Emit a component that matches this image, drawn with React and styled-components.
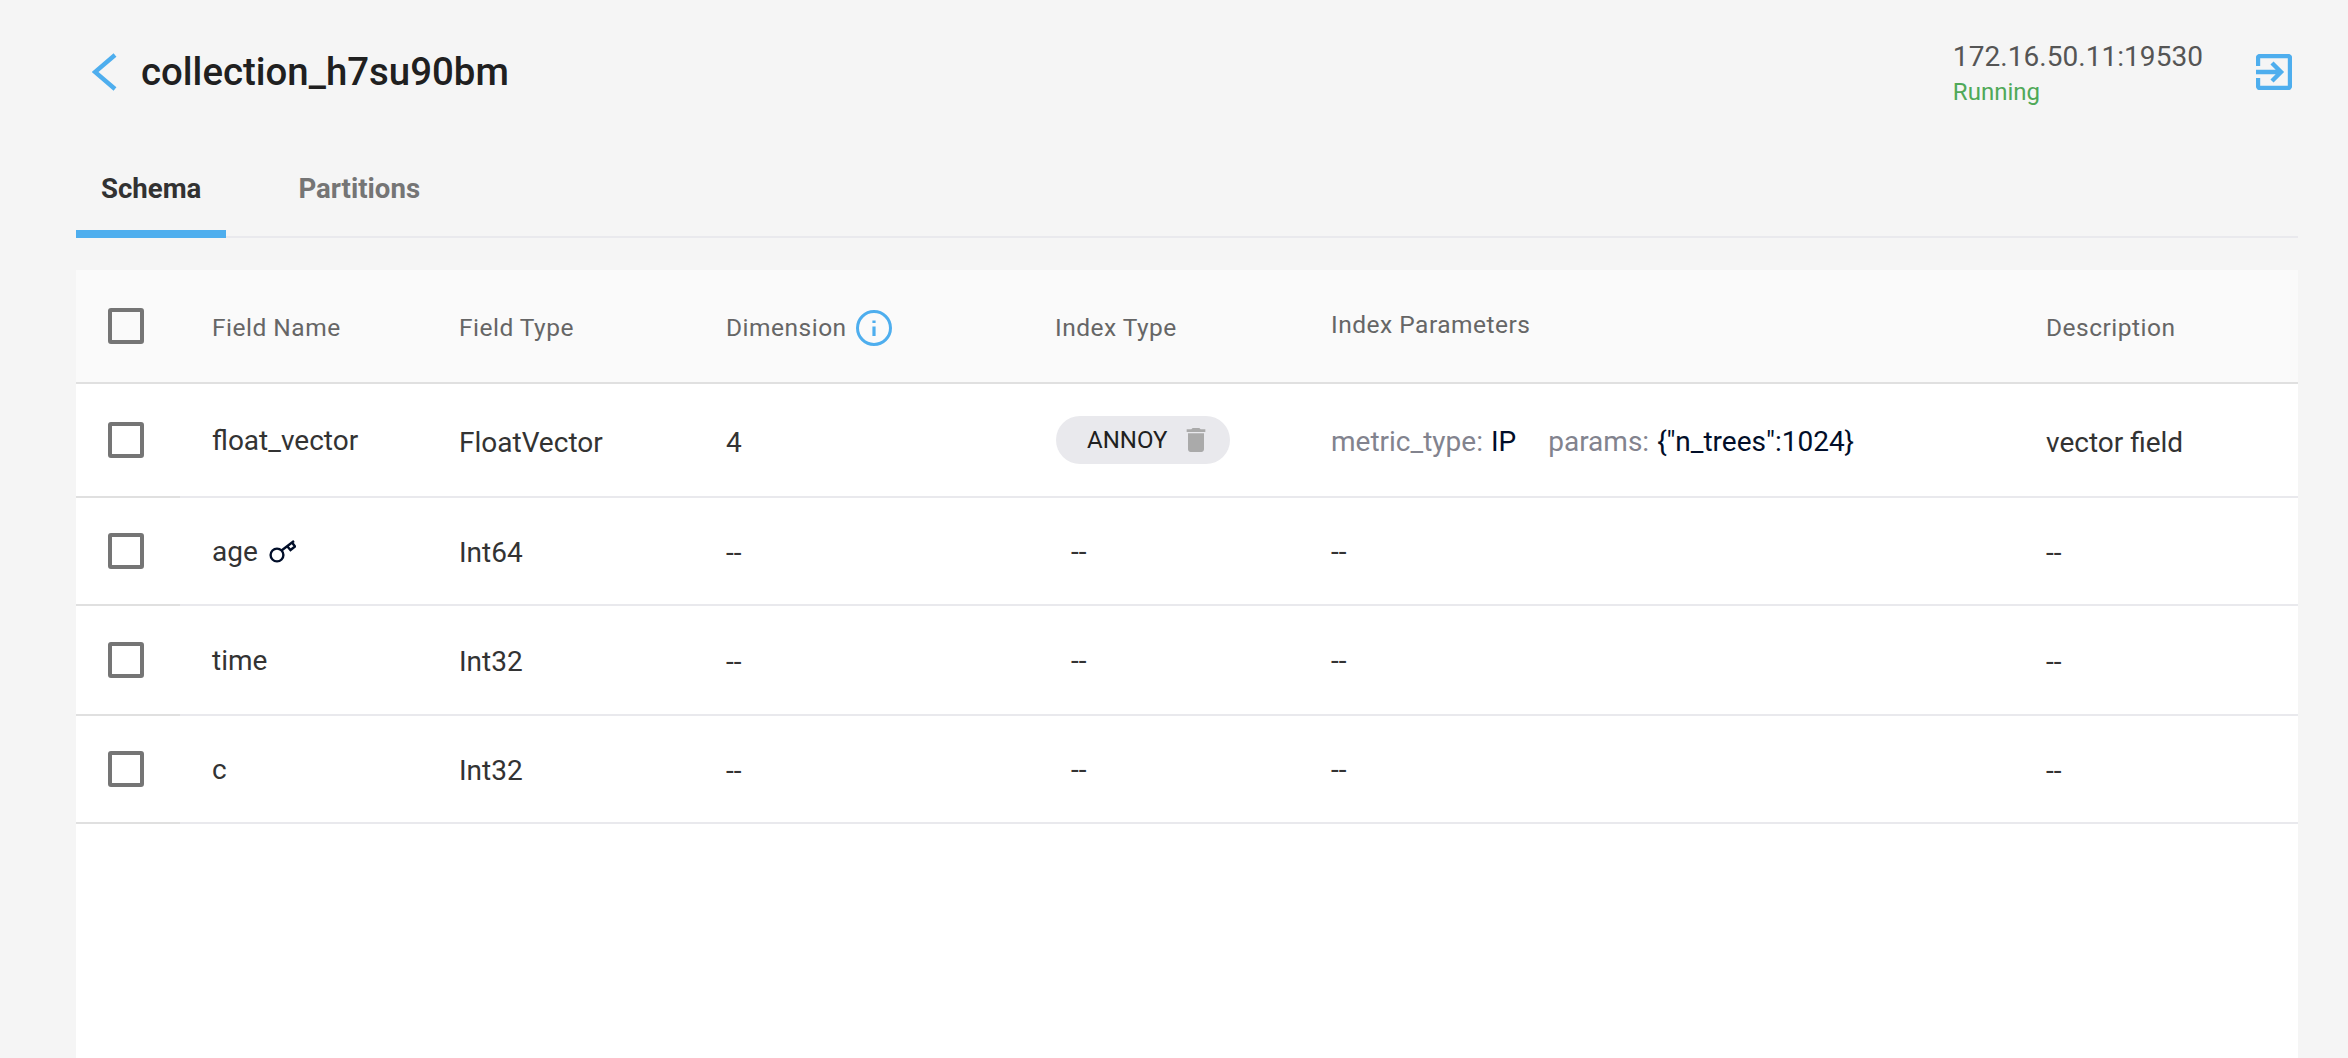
import React from 'react';
import styled, { createGlobalStyle } from 'styled-components';

const GlobalStyle = createGlobalStyle`
  html, body {
    margin: 0;
    height: 100%;
    overflow: hidden;
    background: #f5f5f5;
  }
  body {
    font-family: Roboto, 'Liberation Sans', sans-serif;
    color: #333;
  }
`;

const Page = styled.div`
  display: flex;
  flex-direction: column;
  height: 100vh;
  padding: 0 50px 0 76px;
  box-sizing: border-box;
`;

const Header = styled.header`
  display: flex;
  align-items: center;
  justify-content: space-between;
  height: 144px;
  padding-right: 6px;
  flex: none;
`;

const TitleGroup = styled.div`
  display: flex;
  align-items: center;
  gap: 24px;
  padding-left: 16px;
`;

const Title = styled.h1`
  margin: 0;
  font-size: 38.4px;
  line-height: 44px;
  font-weight: 500;
  color: #202020;
`;

const Status = styled.div`
  display: flex;
  align-items: center;
  gap: 53px;
`;

const StatusText = styled.div`
  padding-top: 5px;
`;

const Address = styled.div`
  font-size: 28px;
  line-height: 33px;
  letter-spacing: 0.05px;
  color: #555;
`;

const Running = styled.div`
  margin-top: 3px;
  font-size: 24px;
  line-height: 33px;
  color: #4fa958;
`;

const Tabs = styled.nav`
  display: flex;
  gap: 47px;
  height: 94px;
  flex: none;
  box-sizing: border-box;
  border-bottom: 2px solid #e9e9ed;
`;

const Tab = styled.div`
  height: 94px;
  box-sizing: border-box;
  padding: 29px 25px 0;
  font-size: 27.6px;
  line-height: 32px;
  font-weight: 700;
  color: ${p => (p.$active ? '#323232' : '#757575')};
  border-bottom: ${p => (p.$active ? '8px solid #4eaeee' : 'none')};
`;

const Table = styled.section`
  flex: 1;
  margin-top: 32px;
  background: #fff;
`;

const Row = styled.div`
  display: grid;
  grid-template-columns: 104px 279px 267px 329px 276px 715px 1fr;
  height: ${p => p.$height}px;
  box-sizing: border-box;
  background: ${p => (p.$head ? '#fafafa' : '#fff')};
`;

const Cell = styled.div`
  display: flex;
  align-items: center;
  box-sizing: border-box;
  min-width: 0;
  padding-left: ${p => p.$indent || 0}px;
  padding-top: ${p => p.$low || 0}px;
  font-size: 28px;
  color: #333;
  border-bottom: 2px solid ${p => (p.$head ? '#e0e0e0' : '#e9e9ed')};
  white-space: pre;
`;

const CheckCell = styled(Cell)`
  padding-left: 32px;
  border-bottom-color: #e0e0e0;
`;

const HeadCell = styled(Cell)`
  font-size: 24.5px;
  letter-spacing: 0.5px;
  color: #666;
  padding-top: 3px;
  padding-bottom: ${p => p.$lift || 0}px;
`;

const Check = styled.input.attrs({ type: 'checkbox' })`
  appearance: none;
  display: block;
  width: 36px;
  height: 36px;
  margin: 0;
  box-sizing: border-box;
  border: 4px solid #757575;
  border-radius: 3px;
  background: transparent;
`;

const Chip = styled.div`
  display: flex;
  align-items: center;
  width: 174px;
  height: 48px;
  box-sizing: border-box;
  margin-left: 1px;
  padding-left: 31px;
  border-radius: 24px;
  background: #e9e9ed;
  font-size: 24px;
  color: #202020;
`;

const ChipDelete = styled.svg`
  margin-left: 13px;
  fill: #aaaaaa;
`;

const Label = styled.span`
  color: #82838e;
`;

const Value = styled.span`
  color: #010e29;
  margin-left: 8px;
`;

const Param = styled.span`
  margin-right: 32px;
`;

const Dash = styled.span`
  margin-left: 16px;
`;

const KeyIcon = styled.svg`
  margin-left: 11px;
  margin-top: -2px;
  fill: none;
  stroke: #010e29;
  stroke-width: 2.4;
`;

const InfoIcon = styled.svg`
  margin-left: 9px;
  fill: none;
  stroke: #4eaeee;
`;

const BackIcon = styled.svg`
  fill: none;
  stroke: #4eaeee;
  stroke-width: 4.4;
`;

const LogoutIcon = styled.svg`
  fill: none;
  stroke: #4eaeee;
  stroke-width: 4.4;
`;

const rows = [
  { name: 'age', type: 'Int64', key: true, height: 108 },
  { name: 'time', type: 'Int32', height: 110 },
  { name: 'c', type: 'Int32', height: 108 },
];

const App = () => (
  <Page>
    <GlobalStyle />
    <Header>
      <TitleGroup>
        <BackIcon width="25" height="38" viewBox="0 0 25 38">
          <path d="M23 2 L3 19 L23 36" />
        </BackIcon>
        <Title>collection_h7su90bm</Title>
      </TitleGroup>
      <Status>
        <StatusText>
          <Address>172.16.50.11:19530</Address>
          <Running>Running</Running>
        </StatusText>
        <LogoutIcon width="36" height="36" viewBox="0 0 36 36">
          <path d="M2 12 V4 A2 2 0 0 1 4 2 H32 A2 2 0 0 1 34 4 V32 A2 2 0 0 1 32 34 H4 A2 2 0 0 1 2 32 V24" />
          <path d="M0 18 H25 M16 9 L25 18 L16 27" />
        </LogoutIcon>
      </Status>
    </Header>

    <Tabs>
      <Tab $active>Schema</Tab>
      <Tab>Partitions</Tab>
    </Tabs>

    <Table>
      <Row $head $height={114}>
        <CheckCell $head><Check /></CheckCell>
        <HeadCell $head $indent={32}>Field Name</HeadCell>
        <HeadCell $head>Field Type</HeadCell>
        <HeadCell $head>
          Dimension
          <InfoIcon width="36" height="36" viewBox="0 0 36 36">
            <circle cx="18" cy="18" r="16.5" strokeWidth="3" />
            <path d="M18 16.5 V26" strokeWidth="3.2" />
            <path d="M18 10.5 V13" strokeWidth="3.2" />
          </InfoIcon>
        </HeadCell>
        <HeadCell $head>Index Type</HeadCell>
        <HeadCell $head $lift={6}>Index Parameters</HeadCell>
        <HeadCell $head>Description</HeadCell>
      </Row>

      <Row $height={114}>
        <CheckCell><Check /></CheckCell>
        <Cell $indent={32}>float_vector</Cell>
        <Cell $low={5}>FloatVector</Cell>
        <Cell $low={5}>4</Cell>
        <Cell>
          <Chip>
            ANNOY
            <ChipDelete width="32" height="32" viewBox="0 0 24 24">
              <path d="M6 19c0 1.1.9 2 2 2h8c1.1 0 2-.9 2-2V7H6v12zM19 4h-3.5l-1-1h-5l-1 1H5v2h14V4z" />
            </ChipDelete>
          </Chip>
        </Cell>
        <Cell $low={3}>
          <Param><Label>metric_type:</Label><Value>IP</Value></Param>
          <Param><Label>params:</Label><Value>{'{"n_trees":1024}'}</Value></Param>
        </Cell>
        <Cell $low={5}>vector field</Cell>
      </Row>

      {rows.map(row => (
        <Row key={row.name} $height={row.height}>
          <CheckCell><Check /></CheckCell>
          <Cell $indent={32}>
            {row.name}
            {row.key && (
              <KeyIcon width="27" height="25" viewBox="0 0 27 25">
                <circle cx="8" cy="17" r="6.4" />
                <path d="M12.5 12.5 L25 3 M18 8 L21.5 12 L26 8.5 L23 4.5" />
              </KeyIcon>
            )}
          </Cell>
          <Cell $low={3}>{row.type}</Cell>
          <Cell $low={3}>--</Cell>
          <Cell><Dash>--</Dash></Cell>
          <Cell>--</Cell>
          <Cell $low={3}>--</Cell>
        </Row>
      ))}
    </Table>
  </Page>
);

export default App;
